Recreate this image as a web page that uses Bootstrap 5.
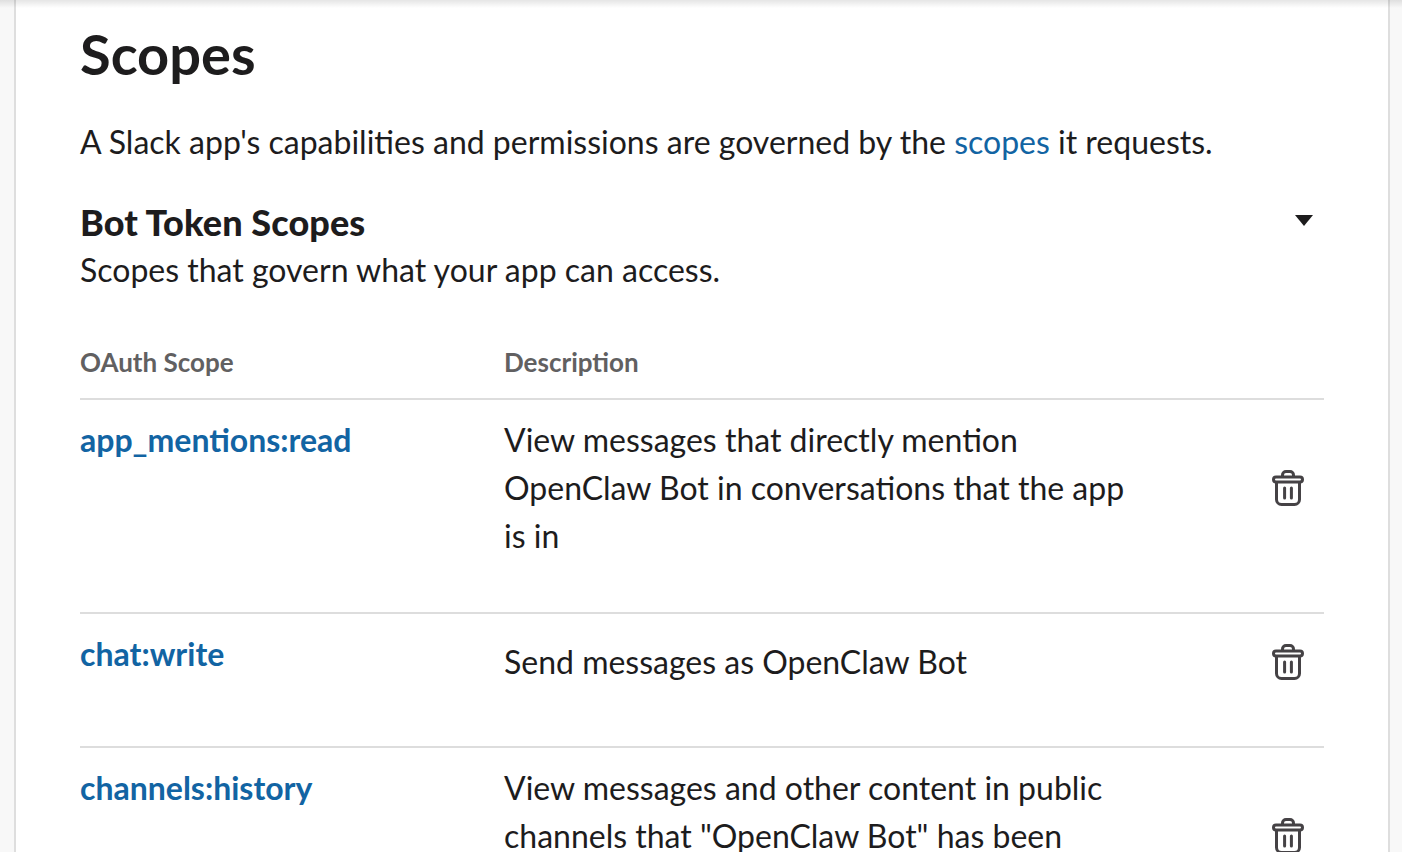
<!DOCTYPE html>
<html lang="en">
<head>
<meta charset="UTF-8">
<title>Scopes</title>
<link href="https://cdn.jsdelivr.net/npm/bootstrap@5.3.0/dist/css/bootstrap.min.css" rel="stylesheet">
<style>
html, body { height: 100%; overflow: hidden; }
body { background: #f8f8f8; font-family: Lato, "Liberation Sans", sans-serif; color: #1d1c1d; font-size: 32px; line-height: 48px; }
.sheet { background: #fff; margin: 0 12px 0 14px; min-height: 852px; border-left: 2px solid #dedede; border-right: 2px solid #dedede; padding: 0 64px; position: relative; }
.top-shade { position: absolute; left: -16px; right: -14px; top: 0; height: 8px; background: linear-gradient(rgba(0,0,0,.1), rgba(0,0,0,0)); }
.page-title { font-size: 56px; font-weight: 700; line-height: 68px; padding-top: 20px; margin: 0 0 30px; }
.intro { margin: 0 0 32px; }
.scope-link { color: #1264a3; text-decoration: none; }
.sub-title { font-size: 36px; font-weight: 900; line-height: 48px; margin: 0; letter-spacing: .1px; }
.head-row { color: #616061; font-size: 26px; font-weight: 700; line-height: 32px; border-bottom: 2px solid #ddd; padding: 52px 0 20px; }
.col-scope { width: 424px; flex-shrink: 0; }
.col-desc { width: 640px; flex-shrink: 0; }
.col-act { flex: 1; }
.scope-row { border-bottom: 2px solid #ddd; padding: 16px 0 52px; }
.scope-row .col-desc { min-height: 64px; }
.scope-name { font-weight: 700; color: #1264a3; }
.caret-down { width: 0; height: 0; border-left: 9px solid transparent; border-right: 9px solid transparent; border-top: 11px solid #1d1c1d; margin: 17px 11px 0 0; }
.bin { width: 32px; height: 36px; margin-right: 20px; }
</style>
</head>
<body>
<svg class="d-none">
  <symbol id="bin-icon" viewBox="0 0 32 36">
    <path d="M10.5 7V5a3.5 3.5 0 0 1 3.5-3.500h4A3.500 3.500 0 0 1 21.500 5v2" fill="none" stroke="#454245" stroke-width="3"/>
    <rect x="1.500" y="7" width="29" height="5" rx="2.500" fill="none" stroke="#454245" stroke-width="3"/>
    <path d="M4.500 12v17.500a5 5 0 0 0 5 5h13a5 5 0 0 0 5-5V12" fill="none" stroke="#454245" stroke-width="3"/>
    <path d="M12.600 18v10M19.400 18v10" fill="none" stroke="#454245" stroke-width="3" stroke-linecap="round"/>
  </symbol>
</svg>
<div class="sheet">
  <div class="top-shade"></div>
  <h1 class="page-title">Scopes</h1>
  <p class="intro">A Slack app's capabilities and permissions are governed by the <a class="scope-link" href="#">scopes</a> it requests.</p>
  <div class="d-flex justify-content-between align-items-start">
    <div>
      <h2 class="sub-title">Bot Token Scopes</h2>
      <div>Scopes that govern what your app can access.</div>
    </div>
    <div class="caret-down"></div>
  </div>
  <div class="head-row d-flex">
    <div class="col-scope">OAuth Scope</div>
    <div class="col-desc">Description</div>
  </div>
  <div class="scope-row d-flex">
    <div class="col-scope scope-name">app_mentions:read</div>
    <div class="col-desc d-flex align-items-center"><div>View messages that directly mention OpenClaw Bot in conversations that the app is in</div></div>
    <div class="col-act d-flex justify-content-end align-items-center"><svg class="bin"><use href="#bin-icon"/></svg></div>
  </div>
  <div class="scope-row d-flex">
    <div class="col-scope scope-name">chat:write</div>
    <div class="col-desc d-flex align-items-center"><div>Send messages as OpenClaw Bot</div></div>
    <div class="col-act d-flex justify-content-end align-items-center"><svg class="bin"><use href="#bin-icon"/></svg></div>
  </div>
  <div class="scope-row d-flex">
    <div class="col-scope scope-name">channels:history</div>
    <div class="col-desc d-flex align-items-center"><div>View messages and other content in public channels that "OpenClaw Bot" has been added to</div></div>
    <div class="col-act d-flex justify-content-end align-items-center"><svg class="bin"><use href="#bin-icon"/></svg></div>
  </div>
</div>
</body>
</html>
